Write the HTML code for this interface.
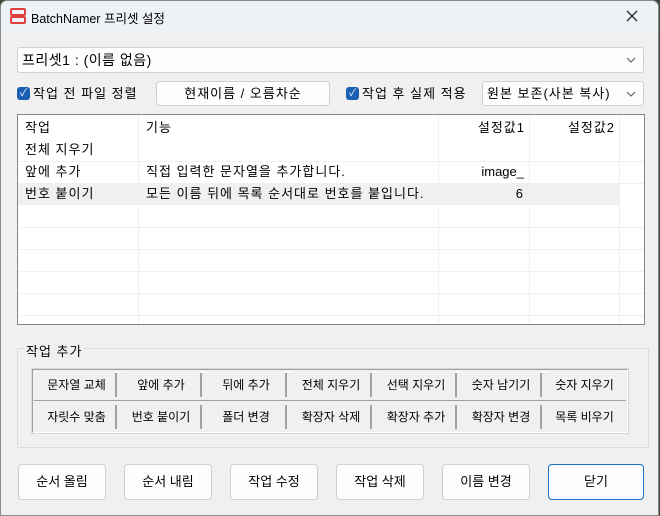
<!DOCTYPE html><html><head><meta charset="utf-8"><style>
*{box-sizing:border-box;margin:0;padding:0}
body{width:660px;height:516px;overflow:hidden;background:#3a4a3a;font-family:"Liberation Sans","Noto Sans CJK KR",sans-serif;font-size:13px;color:#000}
.win{position:absolute;left:0;top:0;width:659px;height:516px;background:#f0f0f0;border:1px solid #8a8a8a;border-radius:7px 7px 0 0;overflow:hidden}
.title{position:absolute;left:0;top:0;width:100%;height:31px;background:#eef2f7}
.abs{position:absolute}
.ls{letter-spacing:1px}
.btn{position:absolute;background:#fdfdfd;border:1px solid #d0d0d0;border-radius:4px;text-align:center}
.cb{position:absolute;width:13px;height:13px;background:#1a5fb4;border-radius:3px;color:#fff;font-size:10px;line-height:13px;text-align:center}
.list{position:absolute;left:16px;top:113px;width:628px;height:211px;background:#fff;border:1px solid #828790}
.vl{position:absolute;top:24px;bottom:0;width:1px;background:#f0f0f0}
.hl{position:absolute;left:0;right:24px;height:1px;background:#f0f0f0}
.cell{position:absolute;height:22px;line-height:22px;letter-spacing:1px}
.tb{position:absolute;top:0;height:28px;line-height:28px;text-align:center;background:#f0f0f0}
.sep{position:absolute;width:2px;height:24px;background:#a0a0a0}
.chev{position:absolute;right:7px;top:9px}
</style></head><body><div class="win">
<div class="title"></div>
<svg class="abs" style="left:9px;top:7px" width="16" height="16"><rect x="1" y="1" width="14" height="6" rx="1" fill="none" stroke="#e0403f" stroke-width="2"/><rect x="1" y="9" width="14" height="6" rx="1" fill="none" stroke="#e0403f" stroke-width="2"/></svg>
<div class="abs" style="left:30px;top:7px;font-size:12.5px">BatchNamer 프리셋 설정</div>
<svg class="abs" style="left:625px;top:9px" width="12" height="12"><path d="M1 1L11 11M11 1L1 11" stroke="#222" stroke-width="1.3"/></svg>
<div class="btn" style="left:16px;top:46px;width:627px;height:26px;border-radius:3px;text-align:left;padding-left:4px;line-height:24px;font-size:14px;letter-spacing:0.5px">프리셋1 : (이름 없음)<svg class="chev" width="10" height="6"><path d="M1 1L5 5L9 1" stroke="#555" fill="none"/></svg></div>
<div class="cb" style="left:16px;top:86px">✓</div>
<div class="abs ls" style="left:32px;top:82px">작업 전 파일 정렬</div>
<div class="btn ls" style="left:155px;top:80px;width:174px;height:25px;line-height:23px">현재이름 / 오름차순</div>
<div class="cb" style="left:345px;top:86px">✓</div>
<div class="abs ls" style="left:361px;top:82px">작업 후 실제 적용</div>
<div class="btn ls" style="left:481px;top:80px;width:162px;height:25px;border-radius:3px;text-align:left;padding-left:4px;line-height:23px">원본 보존(사본 복사)<svg class="chev" width="10" height="6"><path d="M1 1L5 5L9 1" stroke="#555" fill="none"/></svg></div>
<div class="list">
<div class="vl" style="left:120px;top:0"></div><div class="vl" style="left:420px;top:0"></div><div class="vl" style="left:511px;top:0"></div><div class="vl" style="left:601px;top:0"></div>
<div class="hl" style="top:46px;right:0"></div><div class="hl" style="top:68px;right:0"></div><div class="hl" style="top:112px;right:0"></div><div class="hl" style="top:134px;right:0"></div><div class="hl" style="top:156px;right:0"></div><div class="hl" style="top:178px;right:0"></div><div class="hl" style="top:200px;right:0"></div>
<div class="abs" style="left:0;top:68px;width:601px;height:22px;background:#f0f0f0"></div>
<div class="cell" style="left:7px;top:2px">작업</div><div class="cell" style="left:128px;top:2px">기능</div>
<div class="cell" style="left:420px;top:2px;width:87px;text-align:right">설정값1</div><div class="cell" style="left:511px;top:2px;width:86px;text-align:right">설정값2</div>
<div class="cell" style="left:7px;top:24px">전체 지우기</div>
<div class="cell" style="left:7px;top:46px">앞에 추가</div><div class="cell" style="left:128px;top:46px">직접 입력한 문자열을 추가합니다.</div><div class="cell" style="left:420px;top:46px;width:86px;text-align:right;letter-spacing:0">image_</div>
<div class="cell" style="left:7px;top:68px">번호 붙이기</div><div class="cell" style="left:128px;top:68px">모든 이름 뒤에 목록 순서대로 번호를 붙입니다.</div><div class="cell" style="left:420px;top:68px;width:86px;text-align:right">6</div>
</div>
<div class="abs" style="left:16px;top:347px;width:632px;height:100px;border:1px solid #dcdcdc"></div>
<div class="abs ls" style="left:23px;top:340px;background:#f0f0f0;padding:0 2px">작업 추가</div>
<div class="abs" style="left:31px;top:368px;width:596px;height:64px;border:1px solid #a0a0a0;border-right-color:#fff;border-bottom-color:#fff;outline:1px solid #d8d8d8">
<div class="abs" style="left:1px;top:1px;width:592px;height:1px;background:#fff"></div>
<div class="abs" style="left:1px;top:30px;width:592px;height:1px;background:#a0a0a0"></div>
</div>
<div class="btn" style="left:17px;top:463px;width:88px;height:36px;line-height:34px">순서 올림</div>
<div class="btn" style="left:123px;top:463px;width:88px;height:36px;line-height:34px">순서 내림</div>
<div class="btn" style="left:229px;top:463px;width:88px;height:36px;line-height:34px">작업 수정</div>
<div class="btn" style="left:335px;top:463px;width:88px;height:36px;line-height:34px">작업 삭제</div>
<div class="btn" style="left:441px;top:463px;width:88px;height:36px;line-height:34px">이름 변경</div>
<div class="btn" style="left:547px;top:463px;width:96px;height:36px;line-height:34px;border-color:#1a6fc4">닫기</div>
<div style="position:absolute;left:33px;top:370px;font-size:12px">
<div class="tb" style="left:4px;width:77px">문자열 교체</div><div class="sep" style="left:81px;top:2px"></div>
<div class="tb" style="left:88px;width:78px">앞에 추가</div><div class="sep" style="left:166px;top:2px"></div>
<div class="tb" style="left:173px;width:78px">뒤에 추가</div><div class="sep" style="left:251px;top:2px"></div>
<div class="tb" style="left:258px;width:78px">전체 지우기</div><div class="sep" style="left:336px;top:2px"></div>
<div class="tb" style="left:343px;width:78px">선택 지우기</div><div class="sep" style="left:421px;top:2px"></div>
<div class="tb" style="left:428px;width:78px">숫자 남기기</div><div class="sep" style="left:506px;top:2px"></div>
<div class="tb" style="left:513px;width:75px">숫자 지우기</div>
<div class="tb" style="left:4px;width:77px;top:32px">자릿수 맞춤</div><div class="sep" style="left:81px;top:34px"></div>
<div class="tb" style="left:88px;width:78px;top:32px">번호 붙이기</div><div class="sep" style="left:166px;top:34px"></div>
<div class="tb" style="left:173px;width:78px;top:32px">폴더 변경</div><div class="sep" style="left:251px;top:34px"></div>
<div class="tb" style="left:258px;width:78px;top:32px">확장자 삭제</div><div class="sep" style="left:336px;top:34px"></div>
<div class="tb" style="left:343px;width:78px;top:32px">확장자 추가</div><div class="sep" style="left:421px;top:34px"></div>
<div class="tb" style="left:428px;width:78px;top:32px">확장자 변경</div><div class="sep" style="left:506px;top:34px"></div>
<div class="tb" style="left:513px;width:75px;top:32px">목록 비우기</div>
</div>
</div></body></html>
